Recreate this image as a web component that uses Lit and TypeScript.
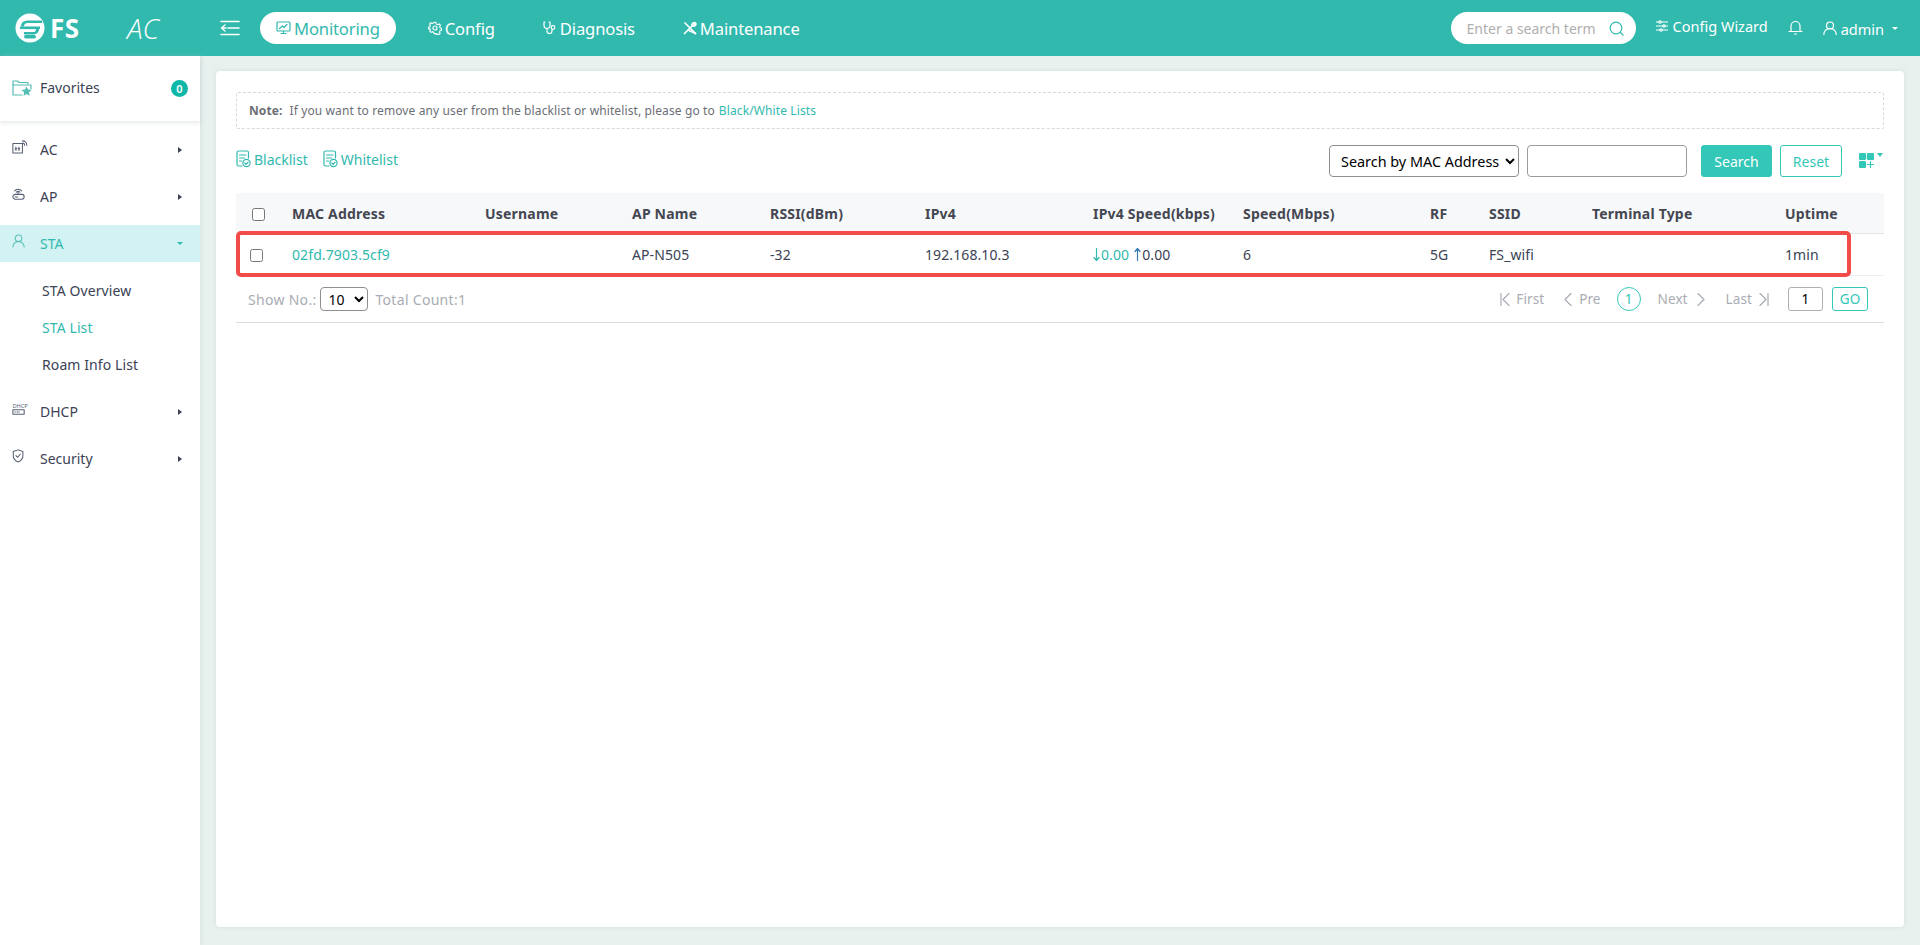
import { LitElement, html, css, svg } from "lit";
import { customElement } from "lit/decorators.js";

const ic = (w: number, h: number, vb: string, body: unknown, cls = "") =>
  html`<svg class="ic ${cls}" width=${w} height=${h} viewBox=${vb} fill="none" stroke="currentColor" stroke-width="1.2" stroke-linecap="round" stroke-linejoin="round">${body}</svg>`;

const COLS = [
  ["MAC Address", "02fd.7903.5cf9"],
  ["Username", ""],
  ["AP Name", "AP-N505"],
  ["RSSI(dBm)", "-32"],
  ["IPv4", "192.168.10.3"],
  ["IPv4 Speed(kbps)", "speed"],
  ["Speed(Mbps)", "6"],
  ["RF", "5G"],
  ["SSID", "FS_wifi"],
  ["Terminal Type", ""],
  ["Uptime", "1min"],
];

const MENU_VB = "0 0 23 18.4";

@customElement("app-root")
export class AppRoot extends LitElement {
  static styles = css`
    :host { display: flex; flex-direction: column; height: 945px; overflow: hidden; font-family: "Noto Sans", "Open Sans", "Liberation Sans", sans-serif; font-size: 14px; color: #3b4254; background: #e9f1ef; }
    * { box-sizing: border-box; }
    .ic { display: block; flex: none; }
    .top { height: 56px; flex: none; background: #31b9ae; color: #fff; display: flex; align-items: center; padding-left: 15px; }
    .logo { display: flex; align-items: center; width: 112px; gap: 5px; }
    .logo b { font-size: 26px; line-height: 1; font-weight: 700; letter-spacing: 0.5px; font-family: "Open Sans", sans-serif; }
    .ac { font-size: 28px; font-style: italic; font-weight: 300; width: 93px; font-family: "Open Sans", sans-serif; line-height: 1; }
    .toggle { width: 40px; }
    .nav { display: flex; align-items: center; gap: 16px; }
    .nav a { display: flex; align-items: center; gap: 3px; height: 32px; padding: 0 16px; border-radius: 16px; font-size: 16.6px; letter-spacing: -0.15px; }
    .nav a.on { background: #fff; color: #31b9ae; }
    .right { margin-left: auto; display: flex; align-items: center; }
    .search { width: 185px; height: 32px; background: #fff; border-radius: 16px; display: flex; align-items: center; justify-content: space-between; padding: 0 12px 0 16px; color: #b1aeb0; font-size: 14px; letter-spacing: 0; margin-right: 20px; }
    .search svg { color: #31b9ae; }
    .wiz { display: flex; align-items: center; gap: 5px; font-size: 14.5px; margin-right: 20px; margin-top: -4px; }
    .bell { margin-right: 20px; margin-top: -2px; }
    .user { display: flex; align-items: center; gap: 4px; margin-right: 22px; }
    .user span { font-size: 14.5px; margin-top: 2px; }
    .caret { width: 0; height: 0; border-left: 3px solid transparent; border-right: 3px solid transparent; border-top: 3px solid #fff; margin-left: 4px; }
    .body { flex: 1; display: flex; min-height: 0; }
    .side { width: 200px; flex: none; background: #fff; box-shadow: 2px 0 4px rgba(190,205,203,.35); z-index: 1; }
    .fav { height: 65px; display: flex; align-items: center; padding: 0 12px; box-shadow: 0 2px 4px rgba(150,160,170,.22); padding-bottom: 1px; }
    .fav .t { margin-left: 8px; flex: 1; margin-top: -1px; }
    .badge { width: 17px; height: 17px; border-radius: 50%; background: #0fb7a8; color: #fff; font-size: 11px; font-weight: 600; display: flex; align-items: center; justify-content: center; margin-right: 0; }
    .fav svg { color: #55bdb4; }
    .menu { padding-top: 10px; display: flex; flex-direction: column; gap: 10px; }
    .row { height: 37px; display: flex; align-items: center; padding: 0 12px; gap: 8px; }
    .row .t { flex: 1; }
    .row svg { color: #566073; margin-top: -3px; }
    .row.on { background: #d3f2f4; color: #31b9ae; }
    .row.on svg { color: #5cc0b6; }
    .tri { width: 0; height: 0; border-top: 3px solid transparent; border-bottom: 3px solid transparent; border-left: 4px solid #3b4254; margin-right: 6px; }
    .row.on .tri { border: 3px solid transparent; border-top: 3px solid #31b9ae; border-bottom: 0; margin-right: 5px; }
    .subs { display: flex; flex-direction: column; }
    .subs a { height: 37px; display: flex; align-items: center; padding-left: 42px; letter-spacing: 0.1px; }
    .subs a.on { color: #31b9ae; }
    .main { flex: 1; padding: 15px 16px 18px; min-width: 0; }
    .card { height: 100%; background: #fff; border-radius: 4px; padding: 21px 20px; box-shadow: 0 0 4px rgba(180,195,193,.4); }
    .note { height: 37px; border: 1px dashed #d8d8dc; border-radius: 2px; display: flex; align-items: center; padding: 0 12px; font-size: 12px; letter-spacing: 0.11px; color: #6c6f76; white-space: pre; }
    .note b { font-weight: 700; margin-right: 7px; }
    .note a { color: #31b9ae; margin-left: 4px; }
    .tools { display: flex; align-items: center; height: 32px; margin-top: 16px; }
    .links { display: flex; gap: 15px; color: #31b9ae; margin-top: -4px; }
    .links a { display: flex; align-items: center; gap: 3px; }
    .filter { margin-left: auto; display: flex; align-items: center; }
    select { font-family: inherit; font-size: 14px; color: #000; background: #fff; border: 1px solid #8f8f8f; border-radius: 4px; }
    .sel { width: 190px; height: 32px; padding: 0 0 0 7px; margin-right: 8px; font-size: 14.4px; }
    .in { width: 160px; height: 32px; border: 1px solid #9b9b9b; border-radius: 4px; background: #fff; margin-right: 14px; }
    .btn { height: 32px; border-radius: 3px; display: flex; align-items: center; justify-content: center; font-size: 14px; border: 1px solid #33c7b8; }
    .btn.p { width: 71px; background: #33c7b8; color: #fff; margin-right: 8px; }
    .btn.o { width: 62px; background: #fff; color: #33c7b8; margin-right: 17px; }
    .gridi { display: flex; color: #33c7b8; width: 25px; align-items: flex-start; gap: 3px; height: 20px; margin-top: 4px; }
    .gridi i { width: 0; height: 0; border-left: 3.5px solid transparent; border-right: 3.5px solid transparent; border-top: 4px solid #33c7b8; }
    .tbl { margin-top: 16px; position: relative; }
    .gr { display: grid; grid-template-columns: 56px 193px 147px 138px 155px 168px 150px 187px 59px 103px 193px 99px; align-items: center; }
    .head { height: 41px; background: #f7f8fa; border-bottom: 1px solid #e4e6ea; font-weight: 700; color: #444751; font-size: 14px; letter-spacing: 0.2px; }
    .data { height: 42px; border-bottom: 1px solid #eceef0; font-size: 14px; letter-spacing: 0.1px; padding-bottom: 1px; }
    .head input { margin: 2px 0 0 16px; width: 13px; height: 13px; display: block; }
    .data input { margin: 2px 0 0 14px; width: 13px; height: 13px; display: block; }
    .link { color: #31b9ae; }
    .speed { display: flex; align-items: center; }
    .speed svg { margin-right: 1px; }
    .speed .dn { color: #31b9ae; }
    .speed .upv { color: #3a78b5; margin-left: 5px; }
    .pg { height: 47px; border-bottom: 1px solid #d9dce0; display: flex; align-items: center; padding: 0 16px 0 12px; color: #a9acb4; font-size: 14px; letter-spacing: 0.3px; }
    .pg select { width: 48px; height: 24px; margin: 0 8px 0 3px; font-size: 14px; padding: 0 0 0 4px; }
    .pager { margin-left: auto; display: flex; align-items: center; letter-spacing: 0.1px; font-size: 13.5px; }
    .pager a { display: flex; align-items: center; }
    .pf { gap: 6px; margin-right: 20px; }
    .pp { gap: 7px; }
    .pn { gap: 9px; margin-right: 21px; }
    .pl { gap: 7px; }
    .cur { width: 24px; height: 24px; border: 1px solid #33c7b8; border-radius: 50%; display: flex; align-items: center; justify-content: center; color: #33c7b8; margin: 0 17px 0 16px; }
    .pi { width: 35px; height: 24px; border: 1px solid #aeb0b4; border-radius: 3px; color: #000; display: flex; align-items: center; justify-content: center; margin: 0 9px 0 19px; background: #fff; }
    .go { width: 36px; height: 24px; border: 1px solid #33c7b8; border-radius: 3px; color: #33c7b8; display: flex; align-items: center; justify-content: center; }
    .mark { position: absolute; left: 0; top: 38px; width: 1615px; height: 46px; border: 4px solid #f24c4a; border-radius: 5px; pointer-events: none; }
  `;

  private doc() {
    return ic(15, 18, "0 0 15 18", svg`<path d="M12.5 8V2.5q0-1.5-1.5-1.5H2.5Q1 1 1 2.5v12Q1 16 2.5 16H6"/><path d="M3.5 5h6.5M3.5 8h5M3.5 11h2"/><circle cx="10.5" cy="13" r="3.6"/><path d="M8.8 13l1.3 1.3 2-2.2"/>`);
  }

  render() {
    return html`
      <div class="top">
        <div class="logo">
          <svg class="ic" width="30" height="30" viewBox="0 0 30 30"><circle cx="15" cy="15" r="14.5" fill="#fff"/><path d="M6 13.5c0-4 3-6 7-6h14v2.500H13c-2.500 0-4 1-4 3.500z" fill="#31b9ae"/><rect x="5" y="13.500" width="20" height="2.600" fill="#31b9ae"/><path d="M24 16c0 3-2 5.500-6 5.500H9v-2.400h9c2 0 3-1 3-3.100z" fill="#31b9ae"/><rect x="9" y="22" width="12" height="3.500" rx="1.700" fill="#31b9ae"/></svg>
          <b>FS</b>
        </div>
        <div class="ac">AC</div>
        <div class="toggle">${ic(20, 16, "0 0 20 16", svg`<path d="M1 1.500h18M8 8h11M1 14.500h18" stroke-width="1.600"/><path d="M5 5L1.500 8 5 11" stroke-width="1.400"/><path d="M2 8h4" stroke-width="1.400"/>`)}</div>
        <div class="nav">
          <a class="on">${ic(15, 14, "0 0 15 14", svg`<rect x="1" y="1" width="13" height="9" rx="1"/><path d="M5 12.500h5M7.500 10v2.500M3.500 7.500l3-2.500 1.500 1.500 3-3"/>`)}Monitoring</a>
          <a>${ic(14, 14, "0 0 14 14", svg`<circle cx="7" cy="7" r="2"/><path d="M6 1h2l.4 1.700 1.500.7 1.600-.8 1.300 1.400-.8 1.500.6 1.500 1.400.4v2l-1.600.4-.6 1.500.8 1.500-1.400 1.300-1.500-.8-1.500.6L8 13H6l-.4-1.500-1.500-.6-1.500.8-1.400-1.300.8-1.500-.6-1.500L0 8V6l1.400-.4.6-1.500-.8-1.500L2.500 1.300l1.500.8 1.500-.6z" transform="translate(.5 .5) scale(.93)"/>`)}Config</a>
          <a>${ic(14, 15, "0 0 14 15", svg`<path d="M2 1H1v3.500a3 3 0 0 0 6 0V1H6"/><path d="M4 7.500V10a2.500 2.500 0 0 0 5 0V8"/><circle cx="10" cy="6.500" r="1.800"/>`)}Diagnosis</a>
          <a>${ic(14, 14, "0 0 14 14", svg`<path d="M1.500 12.500L9 5M5 9l7.500 3.500M2 2l4 4M9 5a2.500 2.500 0 0 1 3.500-3L11 3.500l1 1L13 3a3 3 0 0 1-4 2z" stroke-width="1.700"/><path d="M12.500 12.500L7.500 7.500" stroke-width="1.700"/>`)}Maintenance</a>
        </div>
        <div class="right">
          <div class="search"><span>Enter a search term</span>${ic(15, 15, "0 0 15 15", svg`<circle cx="7" cy="7" r="5.800"/><path d="M11.500 11.500l2.500 2.500"/>`)}</div>
          <div class="wiz">${ic(12, 12, "0 0 12 12", svg`<path d="M0 2h12M0 6h12M0 10h12"/><circle cx="4" cy="2" r="1.200" fill="#31b9ae"/><circle cx="8" cy="6" r="1.200" fill="#31b9ae"/><circle cx="5" cy="10" r="1.200" fill="#31b9ae"/>`)}Config Wizard</div>
          <div class="bell">${ic(15, 15, "0 0 15 15", svg`<path d="M3 11.500V6a4.500 4.500 0 0 1 9 0v5.500M1 11.500h13M6.500 14h2"/>`)}</div>
          <div class="user">${ic(14, 14, "0 0 14 14", svg`<circle cx="7" cy="4.500" r="3.500"/><path d="M.8 13.500a6.200 6.200 0 0 1 12.400 0"/>`)}<span>admin</span><div class="caret"></div></div>
        </div>
      </div>
      <div class="body">
        <div class="side">
          <div class="fav">
            ${ic(20, 16, "0 0 20 16", svg`<path d="M16 4V2.500H7L5.500 1H1v14h9"/><path d="M1 5h18v4"/><path fill="#55bdb4" stroke="none" d="M14.500 6.500l1.500 3 3.500.4-2.500 2.400.7 3.400-3.200-1.700-3 1.700.6-3.400L9.500 10l3.500-.5z"/>`)}
            <span class="t">Favorites</span><span class="badge">0</span>
          </div>
          <div class="menu">
            <div class="row">${ic(20, 16, MENU_VB, svg`<rect x="1" y="4" width="11" height="11"/><path d="M4.500 8v4M8 8v4M3.500 10h2M7 10h2"/><path d="M12 1a5 5 0 0 1 5 5M12 3.500a2.500 2.500 0 0 1 2.500 2.500"/>`)}<span class="t">AC</span><i class="tri"></i></div>
            <div class="row">${ic(20, 16, MENU_VB, svg`<rect x="1" y="8.500" width="13" height="5.500" rx="2.700"/><path d="M7 8.500V5M3.500 11.500h3M3 4.500a5 5 0 0 1 8 0M5 6a2.500 2.500 0 0 1 4 0"/>`)}<span class="t">AP</span><i class="tri"></i></div>
            <div class="row on">${ic(20, 16, MENU_VB, svg`<circle cx="7.500" cy="5" r="3.800"/><path d="M1 15a6.500 6.500 0 0 1 13 0"/>`)}<span class="t">STA</span><i class="tri"></i></div>
            <div class="subs"><a>STA Overview</a><a class="on">STA List</a><a>Roam Info List</a></div>
            <div class="row">${ic(20, 16, MENU_VB, svg`<text x="0.500" y="6.500" font-size="6.500" font-family="Noto Sans" fill="currentColor" stroke="none">DHCP</text><rect x="1" y="9" width="13" height="5"/><path d="M3.500 11.500h0M6 11.500h0M8 11.500h0" stroke-width="1.500"/>`)}<span class="t">DHCP</span><i class="tri"></i></div>
            <div class="row">${ic(20, 16, MENU_VB, svg`<path d="M7 1l5.500 2v5c0 3.500-2.500 5.500-5.500 7-3-1.500-5.500-3.500-5.500-7V3z"/><path d="M4.500 7.500L6.500 9.500 9.500 6"/>`)}<span class="t">Security</span><i class="tri"></i></div>
          </div>
        </div>
        <div class="main">
          <div class="card">
            <div class="note"><b>Note:</b>If you want to remove any user from the blacklist or whitelist, please go to<a>Black/White Lists</a></div>
            <div class="tools">
              <div class="links"><a>${this.doc()}Blacklist</a><a>${this.doc()}Whitelist</a></div>
              <div class="filter">
                <select class="sel"><option>Search by MAC Address</option></select>
                <div class="in"></div>
                <div class="btn p">Search</div>
                <div class="btn o">Reset</div>
                <div class="gridi">
                  ${ic(15, 15, "0 0 15 15", svg`<rect x="0.500" y="0.500" width="6" height="6" rx="1" fill="currentColor"/><rect x="8.500" y="0.500" width="6" height="6" rx="1" fill="currentColor"/><rect x="0.500" y="8.500" width="6" height="6" rx="1" fill="currentColor"/><path d="M11.500 8.500v6M8.500 11.500h6"/>`)}
                  <i></i>
                </div>
              </div>
            </div>
            <div class="tbl">
              <div class="gr head"><div><input type="checkbox" /></div>${COLS.map((c) => html`<div>${c[0]}</div>`)}</div>
              <div class="gr data"><div><input type="checkbox" /></div>${COLS.map((c, i) =>
                c[1] === "speed"
                  ? html`<div class="speed"><span class="dn">${ic(7, 13, "0 0 7 13", svg`<path d="M3.500 0.500v12M1 9.500l2.500 3 2.500-3"/>`)}</span><span class="link">0.00</span><span class="upv">${ic(7, 13, "0 0 7 13", svg`<path d="M3.500 12.500v-12M1 3.500l2.500-3 2.500 3"/>`)}</span><span>0.00</span></div>`
                  : html`<div class=${i === 0 ? "link" : ""}>${c[1]}</div>`
              )}</div>
              <div class="pg">
                Show No.:<select><option>10</option></select>Total Count:1
                <div class="pager">
                  <a class="pf">${ic(10, 13, "0 0 10 13", svg`<path d="M1 0.500v12M9 0.500L3 6.500l6 6"/>`)}First</a>
                  <a class="pp">${ic(8, 13, "0 0 8 13", svg`<path d="M7 0.500L1 6.500l6 6"/>`)}Pre</a>
                  <span class="cur">1</span>
                  <a class="pn">Next${ic(8, 13, "0 0 8 13", svg`<path d="M1 0.500L7 6.500l-6 6"/>`)}</a>
                  <a class="pl">Last${ic(10, 13, "0 0 10 13", svg`<path d="M9 0.500v12M1 0.500L7 6.500l-6 6"/>`)}</a>
                  <span class="pi">1</span>
                  <span class="go">GO</span>
                </div>
              </div>
              <div class="mark"></div>
            </div>
          </div>
        </div>
      </div>
    `;
  }
}
